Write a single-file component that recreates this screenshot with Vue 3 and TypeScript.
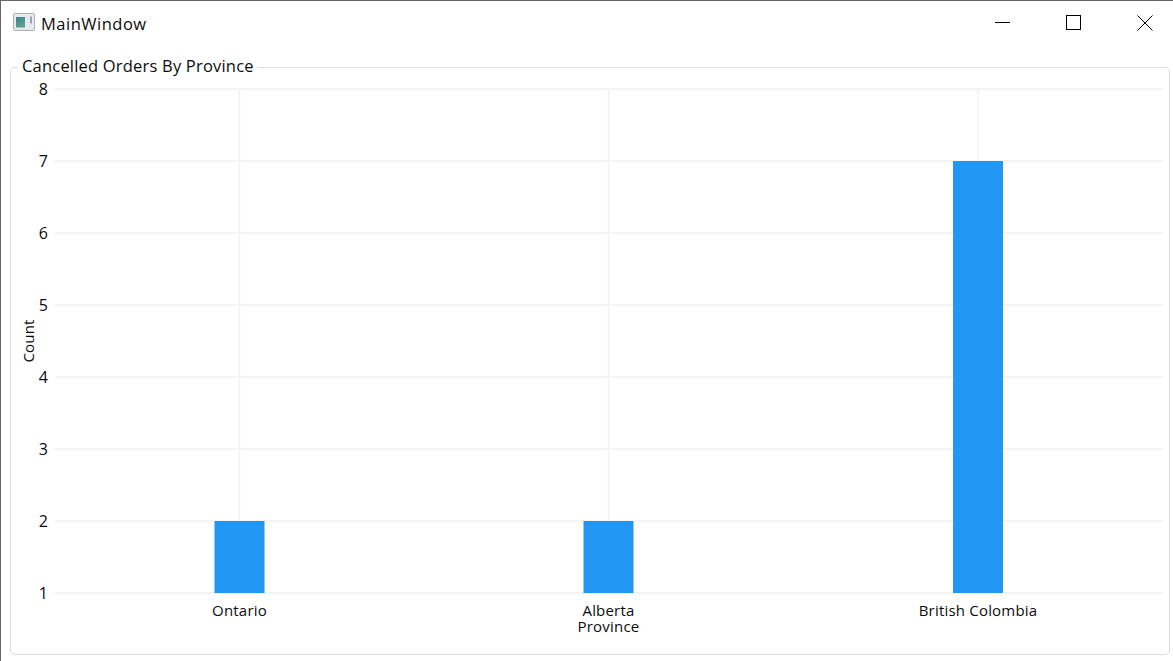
<script setup lang="ts">
const yTicks = [8, 7, 6, 5, 4, 3, 2, 1].map((v) => ({ v, y: 593 - (v - 1) * 72 }))
const bars = [
  { name: 'Ontario', value: 2, x: 239.5 },
  { name: 'Alberta', value: 2, x: 608.5 },
  { name: 'British Colombia', value: 7, x: 978 },
]
const barWidth = 50
const top = (v: number) => 593 - (v - 1) * 72
</script>

<template>
  <div class="window">
    <header class="titlebar">
      <div class="brand">
        <svg class="app-icon" width="22" height="18" viewBox="0 0 22 18">
          <defs>
            <linearGradient id="g" x1="0" y1="0" x2="0.6" y2="1">
              <stop offset="0" stop-color="#3f7f96" />
              <stop offset="1" stop-color="#5fa585" />
            </linearGradient>
          </defs>
          <rect x="0.5" y="0.5" width="21" height="17" rx="1.5" fill="#e6eaee" stroke="#a9b0b8" />
          <rect x="3" y="4" width="9" height="10.5" fill="url(#g)" />
          <rect x="17" y="3.5" width="2" height="7" fill="#98a2aa" />
        </svg>
        <span class="title">MainWindow</span>
      </div>
      <div class="controls">
        <svg width="16" height="16" viewBox="0 0 16 16"><path d="M0 7.5H15" stroke="#000" /></svg>
        <svg width="16" height="16" viewBox="0 0 16 16"><rect x="0.5" y="0.5" width="14" height="14" fill="none" stroke="#000" /></svg>
        <svg width="16" height="16" viewBox="0 0 16 16"><path d="M0.5 0.5L15.5 15.5M15.5 0.5L0.5 15.5" stroke="#000" /></svg>
      </div>
    </header>
    <section class="group">
      <h2 class="legend">Cancelled Orders By Province</h2>
      <svg class="chart" viewBox="11 69 1158 585" width="1158" height="585">
        <line v-for="t in yTicks" :key="t.v" x1="55" x2="1163" :y1="t.y" :y2="t.y" class="grid" />
        <line v-for="b in bars" :key="b.name + 'g'" :x1="b.x" :x2="b.x" y1="89" y2="593" class="grid" />
        <rect v-for="b in bars" :key="b.name + 'b'" :x="b.x - barWidth / 2" :y="top(b.value)" :width="barWidth" :height="593 - top(b.value)" fill="#2196f3" />
        <text v-for="t in yTicks" :key="t.v + 't'" x="48" :y="t.y + 6" text-anchor="end" class="lbl tick">{{ t.v }}</text>
        <text v-for="b in bars" :key="b.name + 'l'" :x="b.x" y="616" text-anchor="middle" class="lbl">{{ b.name }}</text>
        <text x="608.5" y="632" text-anchor="middle" class="lbl">Province</text>
        <text transform="translate(34 341) rotate(-90)" text-anchor="middle" class="lbl">Count</text>
      </svg>
    </section>
  </div>
</template>

<style>
html, body { margin: 0; background: #fff; }
</style>

<style scoped>
.window {
  width: 1173px;
  height: 661px;
  box-sizing: border-box;
  border-top: 1px solid #666;
  border-left: 1px solid #666;
  background: #fff;
  display: flex;
  flex-direction: column;
  overflow: hidden;
  font-family: "Open Sans", "Noto Sans", sans-serif;
  color: #0c0c0c;
}
.titlebar {
  height: 44px;
  display: flex;
  align-items: center;
  justify-content: space-between;
  flex: none;
}
.brand {
  display: flex;
  align-items: center;
  gap: 6px;
  padding-left: 12px;
  margin-top: 1px;
}
.app-icon { display: block; margin-top: -3px; }
.title { font-size: 16.5px; letter-spacing: 0.5px; }
.controls {
  display: flex;
  gap: 55px;
  padding-right: 20px;
  margin-top: -1px;
}
.controls svg { display: block; }
.group {
  position: relative;
  margin: 22px 0 0 9px;
  width: 1160px;
  height: 588px;
  padding-top: 1px;
  box-sizing: border-box;
  border: 1px solid #d9dee2;
  border-radius: 5px;
}
.legend {
  position: absolute;
  left: 7px;
  top: -13px;
  margin: 0;
  padding: 0 4px;
  background: #fff;
  font-size: 16.5px;
  font-weight: 400;
  line-height: 22px;
  letter-spacing: 0.2px;
  white-space: nowrap;
}
.chart { display: block; }
.grid { stroke: #f0f1f3; stroke-width: 1.4; }
.lbl { font-size: 15px; fill: #0c0c0c; letter-spacing: 0.2px; }
.tick { font-size: 16px; }
</style>
